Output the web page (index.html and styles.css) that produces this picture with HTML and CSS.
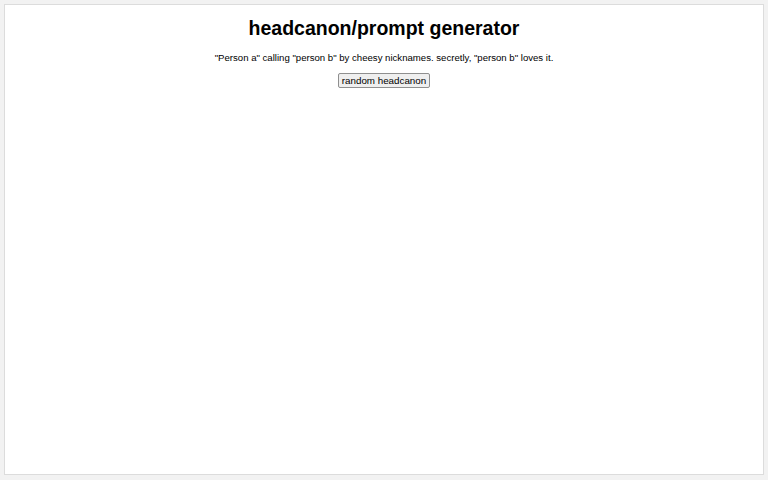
FILE: index.html
```html
<!DOCTYPE html>
<html lang="en">
  <head>
    <meta charset="UTF-8" />
    <meta name="viewport" content="width=device-width, initial-scale=1.0" />
    <title>headcanon/prompt generator</title>
    <link rel="stylesheet" href="styles.css">
  </head>
  <body>
    <div class="page">
      <h1>headcanon/prompt generator</h1>
      <p id="headcanon" class="headcanon">"Person a" calling "person b" by cheesy nicknames. secretly, "person b" loves it.</p>
      <button id="random" class="random-btn">random headcanon</button>
    </div>
  </body>
</html>
```

FILE: styles.css
```css
* {
  box-sizing: border-box;
}

body {
  margin: 0;
  padding: 4px 4px 5px 4px;
  height: 480px;
  background-color: #f2f2f2;
  font-family: "Liberation Sans", Arial, sans-serif;
}

.page {
  height: 100%;
  background-color: #fff;
  border: 1px solid #dcdcdc;
  text-align: center;
  padding-top: 12px;
}

h1 {
  font-size: 19.5px;
  margin: 0 0 12px 0;
}

.headcanon {
  font-size: 9.6px;
  margin: 0 0 7px 0;
}

.random-btn {
  font-family: "Liberation Sans", Arial, sans-serif;
  font-size: 9.8px;
  padding: 1px 3px;
  background-color: #efefef;
  border: 1px solid #8f8f8f;
  border-radius: 2px;
}
```
